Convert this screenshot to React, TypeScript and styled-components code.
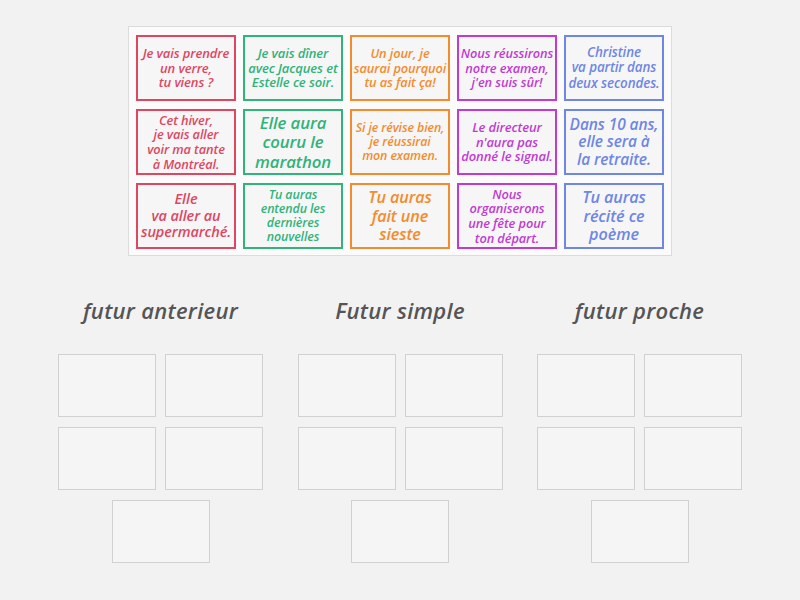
import React from "react";
import styled, { createGlobalStyle } from "styled-components";

const GlobalStyle = createGlobalStyle`
  body {
    margin: 0;
    background: #f3f2f3;
    font-family: "Open Sans", "Liberation Sans", sans-serif;
  }
`;

const colors = {
  red: "#e0465f",
  green: "#2fb47a",
  orange: "#f58b2c",
  purple: "#c13bd2",
  blue: "#6e86e6",
};

type Tone = keyof typeof colors;

const Page = styled.div`
  width: 800px;
  height: 600px;
  overflow: hidden;
`;

const Board = styled.div`
  width: 544px;
  box-sizing: border-box;
  margin: 26px auto 0;
  padding: 8px 8px 6px 7px;
  background: #fbfbfb;
  border: 1px solid #dcdcdc;
  display: grid;
  grid-template-columns: repeat(5, 100px);
  grid-auto-rows: 66px;
  column-gap: 7px;
  row-gap: 8px;
`;

const Card = styled.div<{ $tone: Tone; $size: number }>`
  box-sizing: border-box;
  border: 2.5px solid ${(p) => colors[p.$tone]};
  background: #f7f6f7;
  color: ${(p) => colors[p.$tone]};
  display: flex;
  align-items: center;
  justify-content: center;
  text-align: center;
  white-space: pre-line;
  font-style: italic;
  font-weight: 600;
  font-size: ${(p) => p.$size}px;
  line-height: 1.14;
  letter-spacing: -0.1px;
  overflow: hidden;
`;

const Categories = styled.div`
  display: grid;
  grid-template-columns: repeat(3, 239.5px);
  justify-content: center;
  margin-top: 39px;
`;

const Category = styled.div`
  display: flex;
  flex-direction: column;
  align-items: center;
`;

const Heading = styled.div`
  font-style: italic;
  font-weight: 600;
  font-size: 22px;
  line-height: 30px;
  letter-spacing: 0.3px;
  color: #555;
  margin-bottom: 29px;
`;

const Slots = styled.div`
  display: grid;
  grid-template-columns: repeat(2, 98px);
  grid-auto-rows: 63px;
  column-gap: 9px;
  row-gap: 10px;
`;

const Slot = styled.div<{ $wide?: boolean }>`
  box-sizing: border-box;
  width: 98px;
  border: 1px solid #d2d0d2;
  background: #f6f5f6;
  ${(p) => (p.$wide ? "grid-column: 1 / span 2; justify-self: center;" : "")}
`;

const cards: { text: string; tone: Tone; size: number }[] = [
  { text: "Je vais prendre\nun verre,\ntu viens ?", tone: "red", size: 13 },
  { text: "Je vais dîner\navec Jacques et\nEstelle ce soir.", tone: "green", size: 13 },
  { text: "Un jour, je\nsaurai pourquoi\ntu as fait ça!", tone: "orange", size: 12.8 },
  { text: "Nous réussirons\nnotre examen,\nj'en suis sûr!", tone: "purple", size: 12.8 },
  { text: "Christine\nva partir dans\ndeux secondes.", tone: "blue", size: 13.4 },
  { text: "Cet hiver,\nje vais aller\nvoir ma tante\nà Montréal.", tone: "red", size: 12.8 },
  { text: "Elle aura\ncouru le\nmarathon", tone: "green", size: 16.8 },
  { text: "Si je révise bien,\nje réussirai\nmon examen.", tone: "orange", size: 12.4 },
  { text: "Le directeur\nn'aura pas\ndonné le signal.", tone: "purple", size: 13 },
  { text: "Dans 10 ans,\nelle sera à\nla retraite.", tone: "blue", size: 15.5 },
  { text: "Elle\nva aller au\nsupermarché.", tone: "red", size: 14.5 },
  { text: "Tu auras\nentendu les\ndernières\nnouvelles", tone: "green", size: 12.4 },
  { text: "Tu auras\nfait une\nsieste", tone: "orange", size: 16.2 },
  { text: "Nous\norganiserons\nune fête pour\nton départ.", tone: "purple", size: 12.8 },
  { text: "Tu auras\nrécité ce\npoème", tone: "blue", size: 16.2 },
];

const groups = ["futur anterieur", "Futur simple", "futur proche"];

const App = () => {
  return (
    <Page>
      <GlobalStyle />
      <Board>
        {cards.map((c, i) => (
          <Card key={i} $tone={c.tone} $size={c.size}>
            {c.text}
          </Card>
        ))}
      </Board>
      <Categories>
        {groups.map((g) => (
          <Category key={g}>
            <Heading>{g}</Heading>
            <Slots>
              <Slot />
              <Slot />
              <Slot />
              <Slot />
              <Slot $wide />
            </Slots>
          </Category>
        ))}
      </Categories>
    </Page>
  );
};

export default App;
